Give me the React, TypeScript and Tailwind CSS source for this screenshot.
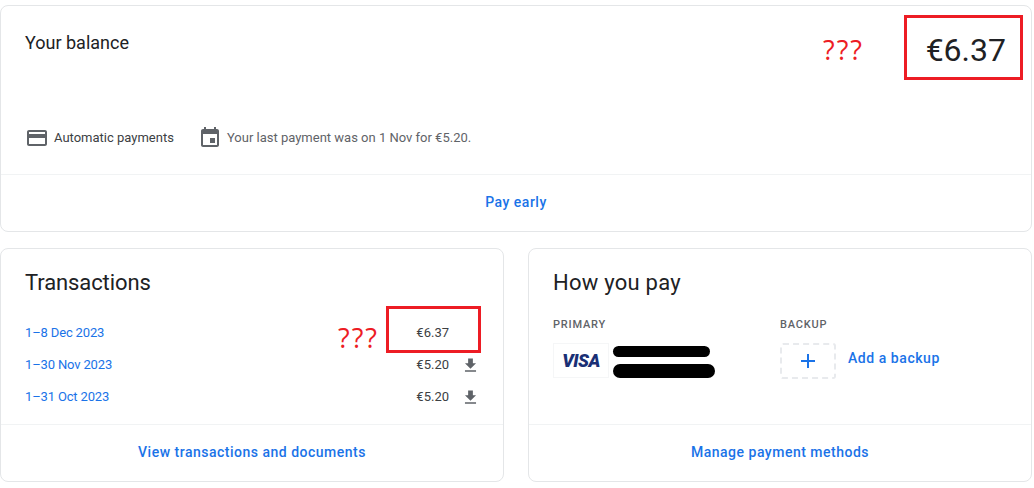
import React from 'react';

const rows = [
  { range: '1–8 Dec 2023', amount: '€6.37', download: false },
  { range: '1–30 Nov 2023', amount: '€5.20', download: true },
  { range: '1–31 Oct 2023', amount: '€5.20', download: true },
];

function CardIcon() {
  return (
    <svg width="24" height="24" viewBox="0 0 24 24" fill="#5f6368" className="shrink-0">
      <path d="M20 4H4c-1.11 0-1.99.89-1.99 2L2 18c0 1.11.89 2 2 2h16c1.11 0 2-.89 2-2V6c0-1.11-.89-2-2-2zm0 14H4v-6h16v6zm0-10H4V6h16v2z" />
    </svg>
  );
}

function EventIcon() {
  return (
    <svg width="24" height="24" viewBox="0 0 24 24" fill="#5f6368" className="shrink-0">
      <path d="M19 3h-1V1h-2v2H8V1H6v2H5c-1.11 0-1.99.9-1.99 2L3 19c0 1.1.89 2 2 2h14c1.1 0 2-.9 2-2V5c0-1.1-.9-2-2-2zm0 16H5V8h14v11zM17 12h-5v5h5v-5z" />
    </svg>
  );
}

function DownloadIcon() {
  return (
    <svg width="19" height="19" viewBox="0 0 24 24" fill="#5f6368">
      <path d="M19 9h-4V3H9v6H5l7 7 7-7zM5 18v2h14v-2H5z" />
    </svg>
  );
}

function CardFooter({ label }: { label: string }) {
  return (
    <div className="flex h-[57px] items-center justify-center border-t border-[#f1f3f4] pb-px text-[14px] font-medium tracking-[0.5px] text-[#1a73e8]">
      {label}
    </div>
  );
}

export default function App() {
  return (
    <div className="relative h-[488px] w-[1034px] overflow-hidden bg-white pr-0.5 pt-[5px] font-['Roboto',sans-serif] text-[#202124]">
      <section className="flex h-[227px] flex-col rounded-lg border border-[#e4e6e8]">
        <div className="flex-1 px-6 pt-[26px]">
          <h2 className="text-[18px] leading-[22px]">Your balance</h2>
          <div className="mt-[72px] flex items-center text-[13px] leading-6 text-[#3c4043]">
            <CardIcon />
            <span className="ml-[5px]">Automatic payments</span>
            <span className="ml-6"><EventIcon /></span>
            <span className="ml-[5px] text-[#5f6368]">Your last payment was on 1 Nov for €5.20.</span>
          </div>
        </div>
        <CardFooter label="Pay early" />
      </section>

      <div className="mt-[16px] flex gap-6">
        <section className="flex h-[234px] w-[504px] flex-col rounded-lg border border-[#e4e6e8]">
          <div className="flex-1 px-6 pt-[19px]">
            <h2 className="text-[22px] leading-[30px] tracking-[-0.1px]">Transactions</h2>
            <div className="mt-[19px]">
              {rows.map((row) => (
                <div key={row.range} className="-mr-px flex h-8 items-center text-[13px]">
                  <span className="flex-1 tracking-[-0.15px] text-[#1a73e8]">{row.range}</span>
                  <span className="text-[#3c4043]">{row.amount}</span>
                  <span className="ml-[11px] flex w-[20px] justify-center">
                    {row.download && <DownloadIcon />}
                  </span>
                </div>
              ))}
            </div>
          </div>
          <CardFooter label="View transactions and documents" />
        </section>

        <section className="flex h-[234px] flex-1 flex-col rounded-lg border border-[#e4e6e8]">
          <div className="flex-1 px-6 pt-[19px]">
            <h2 className="text-[22px] leading-[30px] tracking-[0.25px]">How you pay</h2>
            <div className="mt-[19px] flex">
              <div className="w-[227px]">
                <div className="text-[11px] font-medium leading-[16px] tracking-[0.8px] text-[#5f6368]">PRIMARY</div>
                <div className="mt-[10px] flex">
                  <div className="flex h-[35px] w-[56px] items-center justify-center border border-[#f5f6f7] text-[18px] font-black italic tracking-[-0.5px] text-[#1a2f75]">
                    VISA
                  </div>
                  <div className="ml-[4px] mt-[3px] flex flex-col gap-[7px]">
                    <div className="h-[11px] w-[97px] rounded-full bg-black" />
                    <div className="h-[14px] w-[102px] rounded-full bg-black" />
                  </div>
                </div>
              </div>
              <div>
                <div className="text-[11px] font-medium leading-[16px] tracking-[0.8px] text-[#5f6368]">BACKUP</div>
                <div className="mt-[10px] flex items-center">
                  <div className="flex h-[36px] w-[56px] items-center justify-center rounded-[3px] border-2 border-dashed border-[#e8eaed]">
                    <svg width="24" height="24" viewBox="0 0 24 24" fill="#1a73e8">
                      <path d="M19 13h-6v6h-2v-6H5v-2h6V5h2v6h6z" />
                    </svg>
                  </div>
                  <span className="mb-[6px] ml-3 text-[14px] font-medium tracking-[0.55px] text-[#1a73e8]">Add a backup</span>
                </div>
              </div>
            </div>
          </div>
          <CardFooter label="Manage payment methods" />
        </section>
      </div>

      {/* red annotations drawn over the screenshot */}
      <div className="absolute left-[904px] top-[15px] flex h-[65px] w-[119px] items-center justify-end border-[3px] border-[#ed1c24] pr-[14px] pt-[5px] text-[32px]">
        €6.37
      </div>
      <div className="absolute left-[823px] top-[32px] font-['Open_Sans',sans-serif] text-[27px] leading-[36px] tracking-[2px] text-[#ed1c24]">???</div>
      <div className="absolute left-[386px] top-[306px] h-[47px] w-[95px] border-[3px] border-[#ed1c24]" />
      <div className="absolute left-[338px] top-[320px] font-['Open_Sans',sans-serif] text-[27px] leading-[36px] tracking-[2px] text-[#ed1c24]">???</div>
    </div>
  );
}
